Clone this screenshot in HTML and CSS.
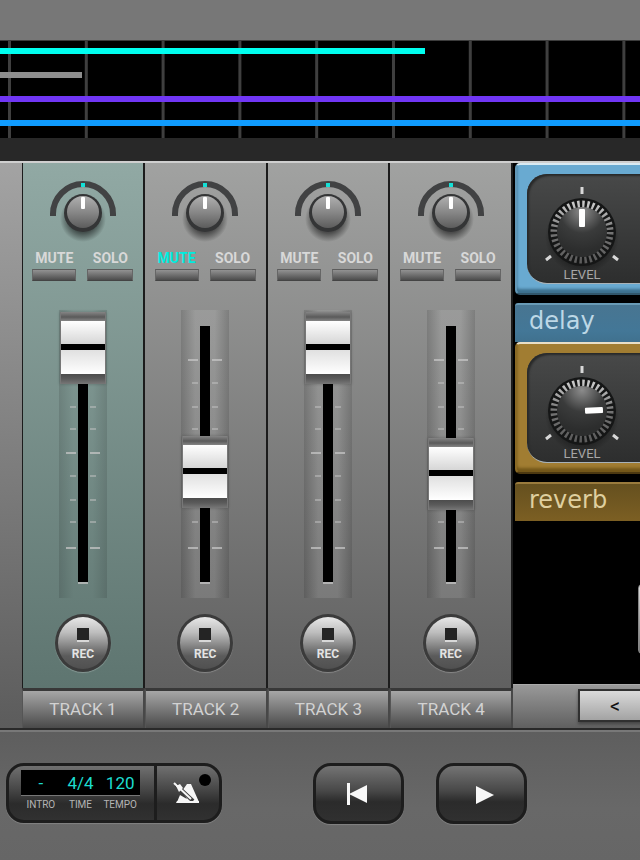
FILE: index.html
```html
<!DOCTYPE html>
<html lang="en">
<head>
<meta charset="utf-8">
<title>Mixer</title>
<meta name="viewport" content="width=device-width, initial-scale=1">
<link rel="stylesheet" href="styles.css">
</head>
<body>
<svg class="defs" aria-hidden="true">
  <defs>
    <linearGradient id="cap" x1="0" y1="0" x2="0" y2="1"><stop offset="0" stop-color="#b0b0b0"/><stop offset="0.5" stop-color="#888"/><stop offset="1" stop-color="#5c5c5c"/></linearGradient>
    <radialGradient id="shade"><stop offset="0.6" stop-color="#000" stop-opacity="0.5"/><stop offset="1" stop-color="#000" stop-opacity="0"/></radialGradient>
    <radialGradient id="dome" cx="0.5" cy="0.08" r="0.8"><stop offset="0" stop-color="#8c8c8c"/><stop offset="0.55" stop-color="#3a3b3b"/><stop offset="1" stop-color="#2c2d2d"/></radialGradient>
    <linearGradient id="teeth" x1="0" y1="0" x2="0" y2="1"><stop offset="0" stop-color="#c8c8c8"/><stop offset="0.5" stop-color="#747474"/><stop offset="1" stop-color="#5c5c5c"/></linearGradient>
    <symbol id="pan" viewBox="0 0 72 66">
      <path d="M6 39V37a30 30 0 0 1 60 0v2" fill="none" stroke="#414243" stroke-width="6"/>
      <rect x="34" y="6" width="4" height="4" fill="#14e0d6"/>
      <circle cx="36" cy="42" r="23" fill="url(#shade)"/>
      <circle cx="36" cy="36" r="19" fill="#343536"/>
      <circle cx="36" cy="35" r="16" fill="url(#cap)"/>
      <rect x="34" y="20" width="4" height="12" rx="1" fill="#fff"/>
    </symbol>
    <symbol id="slot" viewBox="0 0 48 288">
      <rect x="19" y="16" width="10" height="256" fill="#000"/>
      <path d="M7 50h10M31 50h10M7 143h10M31 143h10M7 238h10M31 238h10M19 273h10" stroke="#c4c4c4" stroke-opacity="0.75" stroke-width="2"/>
      <path d="M11 73h6M31 73h6M11 97h6M31 97h6M11 119h6M31 119h6M11 166h6M31 166h6M11 190h6M31 190h6M11 212h6M31 212h6" stroke="#c4c4c4" stroke-opacity="0.5" stroke-width="2"/>
    </symbol>
    <symbol id="dial" viewBox="0 0 84 96">
      <path d="M42 2v7M6 75l5-4M78 75l-5-4" stroke="#d8d8d8" stroke-width="3"/>
      <circle cx="42" cy="52" r="37" fill="url(#shade)"/>
      <circle cx="42" cy="47" r="34" fill="#151616"/>
      <circle cx="42" cy="47" r="28" fill="none" stroke="url(#teeth)" stroke-width="7" stroke-dasharray="2.4 2.488"/>
      <circle cx="42" cy="47" r="25" fill="url(#dome)"/>
    </symbol>
  </defs>
</svg>
<main class="app">
  <header class="topbar"></header>
  <section class="timeline" aria-label="Timeline">
    <div class="clip cyan" style="width:66.4%"></div>
    <div class="clip gray" style="width:12.8%"></div>
    <div class="clip violet" style="width:100%"></div>
    <div class="clip blue" style="width:100%"></div>
  </section>
  <div class="ruler"></div>

  <section class="mixer">
    <div class="gutter"></div>

    <article class="channel selected">
      <div class="strip">
        <label class="pan"><svg><use href="#pan"/></svg><input type="range" min="-50" max="50" value="0" aria-label="Pan track 1"></label>
        <div class="switches"><button type="button">MUTE<i></i></button><button type="button">SOLO<i></i></button></div>
        <label class="fader"><svg><use href="#slot"/></svg><input type="range" min="0" max="100" value="100" aria-label="Volume track 1"></label>
        <button type="button" class="rec"><i></i>REC</button>
      </div>
      <h2>TRACK 1</h2>
    </article>

    <article class="channel">
      <div class="strip">
        <label class="pan"><svg><use href="#pan"/></svg><input type="range" min="-50" max="50" value="0" aria-label="Pan track 2"></label>
        <div class="switches"><button type="button" class="on">MUTE<i></i></button><button type="button">SOLO<i></i></button></div>
        <label class="fader"><svg><use href="#slot"/></svg><input type="range" min="0" max="100" value="42" aria-label="Volume track 2"></label>
        <button type="button" class="rec"><i></i>REC</button>
      </div>
      <h2>TRACK 2</h2>
    </article>

    <article class="channel">
      <div class="strip">
        <label class="pan"><svg><use href="#pan"/></svg><input type="range" min="-50" max="50" value="0" aria-label="Pan track 3"></label>
        <div class="switches"><button type="button">MUTE<i></i></button><button type="button">SOLO<i></i></button></div>
        <label class="fader"><svg><use href="#slot"/></svg><input type="range" min="0" max="100" value="100" aria-label="Volume track 3"></label>
        <button type="button" class="rec"><i></i>REC</button>
      </div>
      <h2>TRACK 3</h2>
    </article>

    <article class="channel">
      <div class="strip">
        <label class="pan"><svg><use href="#pan"/></svg><input type="range" min="-50" max="50" value="0" aria-label="Pan track 4"></label>
        <div class="switches"><button type="button">MUTE<i></i></button><button type="button">SOLO<i></i></button></div>
        <label class="fader"><svg><use href="#slot"/></svg><input type="range" min="0" max="100" value="41" aria-label="Volume track 4"></label>
        <button type="button" class="rec"><i></i>REC</button>
      </div>
      <h2>TRACK 4</h2>
    </article>

    <aside class="effects">
      <section class="effect delay">
        <div class="pedal"><div class="plate">
          <label class="dial"><svg viewBox="0 0 84 96"><use href="#dial"/><rect x="39" y="24" width="6" height="18" rx="1" fill="#fff"/></svg><input type="range" min="0" max="100" value="50" aria-label="Delay level"><span>LEVEL</span></label>
        </div></div>
        <h3>delay</h3>
      </section>
      <section class="effect reverb">
        <div class="pedal"><div class="plate">
          <label class="dial"><svg viewBox="0 0 84 96"><use href="#dial"/><rect x="39" y="26" width="6" height="18" rx="1" fill="#fff" transform="rotate(87 42 47)"/></svg><input type="range" min="0" max="100" value="82" aria-label="Reverb level"><span>LEVEL</span></label>
        </div></div>
        <h3>reverb</h3>
      </section>
      <div class="handle"></div>
      <footer class="pager"><button type="button">&lt;</button></footer>
    </aside>
  </section>

  <footer class="transport">
    <div class="tempo">
      <button type="button" class="settings">
        <span class="values"><span>-</span><span>4/4</span><span>120</span></span>
        <span class="names"><span>INTRO</span><span>TIME</span><span>TEMPO</span></span>
      </button>
      <button type="button" class="metronome" aria-label="Metronome">
        <svg viewBox="0 0 66 56"><circle cx="48" cy="14" r="6" fill="#000"/><path d="M20 36L23 29L30 33L25 25L30 18L34 18L42 36Z" fill="#f6f6f6"/><path d="M19 19L36 35" stroke="#3c3c3c" stroke-width="4"/><path d="M17 17L34 33" stroke="#f6f6f6" stroke-width="2"/><path d="M19 20L23 18L26 22L22 26Z" fill="#f6f6f6"/><path d="M20 35h22v2H19z" fill="#f6f6f6"/></svg>
      </button>
    </div>
    <div class="playback">
      <button type="button" aria-label="Rewind"><svg viewBox="0 0 84 54"><path d="M31 16h3v22h-3zM33 27L51 18V36Z" fill="#f8f8f8"/></svg></button>
      <button type="button" aria-label="Play"><svg viewBox="0 0 84 54"><path d="M37 19L55 28L37 37Z" fill="#f8f8f8"/></svg></button>
    </div>
  </footer>
</main>
</body>
</html>
```
FILE: styles.css
```css
* { box-sizing: border-box; }
body { margin: 0; background: #666; font-family: Roboto, "Liberation Sans", sans-serif; }
button { margin: 0; padding: 0; border: 0; background: none; color: inherit; font: inherit; cursor: pointer; }
h2, h3 { margin: 0; font-weight: 400; }
svg { display: block; }
.defs { position: absolute; width: 0; height: 0; }
.app { display: flex; flex-direction: column; min-height: 100vh; overflow: hidden; }

.topbar { height: 41px; background: #777; border-bottom: 1px solid #3c3c3c; }
.timeline {
  display: flex; flex-direction: column; gap: 18px; padding: 7px 0 12px;
  background: linear-gradient(90deg, #3f3f3f 3px, transparent 3px) 8px 0 / 12% 100% #000;
}
.clip { height: 6px; }
.cyan { background: #00fff0; }
.gray { background: #8e8e8e; }
.violet { background: #7036f5; }
.blue { background: #109cff; }
.ruler { height: 25px; background: #282828; border-bottom: 2px solid #cfcfcf; }

.mixer {
  display: grid; grid-template-columns: 22px repeat(4, minmax(0, 1fr)) 127px;
  border-bottom: 2px solid #292929;
}
.gutter { background: linear-gradient(#a3a3a3, #5c5c5c); }
.channel { display: flex; flex-direction: column; }
.strip {
  display: flex; flex-direction: column; align-items: center; padding: 14px 0 16px;
  background: linear-gradient(#a1a2a1, #606060); border-right: 2px solid #1c1c1c;
}
.selected .strip { background: linear-gradient(#91a9a4, #5e7570); border-left: 1px solid #1c1c1c; }
.channel h2 {
  height: 40px; border-top: 3px solid #383838; border-right: 2px solid #484848;
  border-left: 1px solid #555;
  background: linear-gradient(#a6a6a6, #4a4a4a);
  color: #d2d2d2; font-size: 17px; line-height: 36px; text-align: center;
}
.pan, .fader, .dial { display: grid; justify-items: center; }
.pan > *, .fader > * { grid-area: 1 / 1; }
.pan svg { width: 72px; height: 66px; }
.pan input, .dial input { width: 100%; height: 100%; margin: 0; opacity: 0; cursor: pointer; }

.switches { display: grid; grid-template-columns: 44px 46px; gap: 11px; margin: 7px 0 29px; }
.switches button { color: #d8d8d8; font-size: 14px; font-weight: 700; line-height: 16px; }
.switches .on { color: #00ecdf; }
.switches i {
  display: block; height: 12px; margin-top: 3px; border: 1px solid #666;
  border-top-color: #5c5c5c; border-bottom-color: #444;
  background: linear-gradient(#929292, #4c4c4c);
}

.fader {
  width: 48px; height: 288px; margin-bottom: 16px;
  background: linear-gradient(90deg, rgb(0 0 0 / 12%), rgb(255 255 255 / 10%) 30%, rgb(255 255 255 / 10%) 70%, rgb(0 0 0 / 12%));
}
.selected .fader { background: linear-gradient(90deg, rgb(0 0 0 / 12%), transparent 30%, transparent 70%, rgb(0 0 0 / 12%)); }
.fader svg { width: 48px; height: 288px; }
.fader input {
  appearance: none; writing-mode: vertical-lr; direction: rtl;
  width: 46px; height: 286px; margin: 2px 0 0; background: none; cursor: pointer;
}
.fader input::-webkit-slider-runnable-track { width: 46px; background: none; }
.fader input::-webkit-slider-thumb {
  appearance: none; width: 46px; height: 72px;
  border: solid #777; border-width: 0 1px;
  background: linear-gradient(#858585 0, #5a5a5a 5px, #858585 9px, #fff 9px, #d6d6d6 32px, #000 32px, #000 38px, #e0e0e0 38px, #fff 62px, #4c4c4c 62px, #5b5b5b 67px, #777 72px);
  box-shadow: 0 0 3px rgb(0 0 0 / 25%);
}

.rec {
  display: flex; flex-direction: column; align-items: center;
  width: 56px; height: 58px; padding-top: 11px;
  border: 3px solid #3b3b3b; border-radius: 50%;
  background: linear-gradient(#e8e8e8, #bdbdbd 30%, #5b5b5b 75%, #505050);
  box-shadow: 0 1px 1px rgb(255 255 255 / 25%);
  color: #e4e4e4; font-size: 12px; font-weight: 700; line-height: 12px;
}
.rec i { width: 12px; height: 14px; margin-bottom: 6px; background: #242424; border-bottom: 2px solid #d8d8d8; }

.effects { display: flex; flex-direction: column; overflow: hidden; background: #000; padding-left: 2px; }
.effect { display: flex; flex-direction: column; gap: 8px; width: 240px; }
.pedal {
  padding: 9px 12px 9px 10px; border: solid; border-width: 2px 1px 2px 2px; border-radius: 5px;
  height: 132px;
}
.delay .pedal { background: #69aad1; border-color: #d9eaf2 #6297b6 #31566b #6297b6; box-shadow: inset 0 -4px 3px #3d708d; }
.reverb .pedal { background: #a17d32; border-color: #e8dfc8 #8a6924 #4c3810 #8a6924; box-shadow: inset 0 -4px 3px #735719; }
.plate {
  display: flex; height: 110px; padding-left: 13px; border-radius: 20px;
  border-bottom: 1px solid #a9b3b8;
  background: linear-gradient(#484949, #2d2e2e); box-shadow: inset 2px 2px 2px #292a2a;
}
.dial { grid-template-rows: 94px 16px; color: #a7a7a7; font-size: 13px; line-height: 14px; }
.dial svg { grid-area: 1 / 1; width: 84px; height: 96px; margin-top: 11px; }
.dial input { grid-area: 1 / 1; min-width: 0; width: 84px; }
.dial span { grid-area: 2 / 1; z-index: 1; }
.effect h3 {
  height: 39px; padding-left: 14px; border-top: 2px solid #699ab5; border-radius: 3px 0 0;
  font-family: "DejaVu Sans", sans-serif; font-size: 24px; line-height: 32px;
}
.delay h3 { color: #bdd8e6; background: linear-gradient(#487591, #437797 70%, #40718e); }
.reverb h3 { color: #dfcf9f; background: linear-gradient(#65501f, #7c5f23); border-top-color: #9a7b3d; }
.handle {
  width: 48px; height: 70px; margin: auto 0 30px; align-self: flex-end; margin-right: -46px;
  border: 1px solid #888; border-radius: 4px; background: linear-gradient(#ddd, #777);
}
.pager {
  display: flex; margin-left: -2px; padding: 4px 0 6px 65px; height: 44px;
  border-top: 1px solid #aaa; background: linear-gradient(#999, #606060);
}
.pager button {
  flex: 0 0 74px; border: 2px solid #303030; background: linear-gradient(#dadada, #a3a3a3);
  box-shadow: 0 2px 3px rgb(0 0 0 / 35%);
  color: #111; font-size: 20px; line-height: 24px;
}

.transport {
  flex: 1; display: flex; align-items: flex-start; padding: 31px 6px;
  border-top: 2px solid #787878; background: linear-gradient(#5e5e5e, #686868 60%, #666);
}
.tempo, .playback button {
  border: 3px solid #1d1d1d; border-radius: 18px; overflow: hidden;
  box-shadow: 0 1px 1px rgb(255 255 255 / 18%);
}
.tempo { display: flex; width: 216px; height: 60px; margin-right: 91px; background: linear-gradient(#707070, #454545 45%, #2b2b2b 70%, #313131); }
.settings { flex: 0 0 148px; padding: 4px 14px 0 12px; border-right: 3px solid #1d1d1d; }
.settings > span { display: grid; grid-template-columns: repeat(3, 1fr); text-align: center; }
.values { height: 26px; background: #000; border-bottom: 1px solid #777; color: #1cdccf; font-size: 17px; line-height: 27px; }
.names { height: 24px; color: #b4b4b4; font-size: 10px; line-height: 18px; }
.metronome { flex: 1; }
.metronome svg { width: 66px; height: 56px; }
.playback { display: flex; gap: 32px; }
.playback button { width: 91px; height: 61px; background: linear-gradient(#747474, #484848 45%, #2b2b2b 65%, #303030); }
.playback svg { width: 84px; height: 54px; }
```
